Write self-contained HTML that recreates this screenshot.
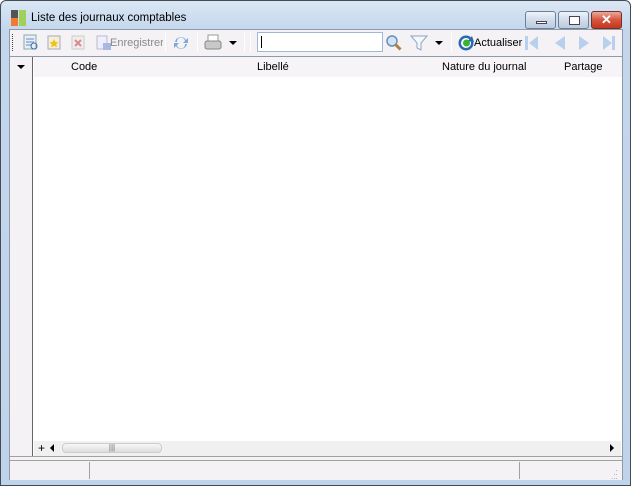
<!DOCTYPE html>
<html><head><meta charset="utf-8"><style>
*{margin:0;padding:0;box-sizing:border-box}
body{width:631px;height:486px;overflow:hidden;font-family:"Liberation Sans",sans-serif;font-size:11px;color:#000;background:#fff}
.win{position:absolute;left:0;top:0;width:631px;height:486px;border:1px solid #434b55;border-radius:6px 6px 0 0;background:linear-gradient(#dbe7f4,#c3d6ec 30px,#bfd3ea);}
.title{position:absolute;left:30px;top:11px;font-size:11.5px;color:#000}
.ico{position:absolute;left:10px;top:9px;width:16px;height:16px}
.btn{position:absolute;top:10px;height:18px;border:1px solid #6d7f96;border-radius:3px;background:linear-gradient(#eef3f9,#d0dcea 50%,#bccbdd)}
.close{background:linear-gradient(#e9a99a,#d5553c 50%,#c0381f);border-color:#7a2d22}
.client{position:absolute;left:8px;top:28px;width:614px;height:451px;background:#f4f2f4;border:1px solid #8e9aa8}
.tb{position:absolute;left:0;top:0;width:612px;height:25px;background:#f4f2f4}
.sep{position:absolute;top:3px;width:1px;height:19px;background:#c8c6c8;border-right:1px solid #fff}
.grid{position:absolute;left:0;top:26px;width:612px;height:401px;background:#fff;border-top:1px solid #8e9aa8;border-bottom:1px solid #a0a0a0}
.rs{position:absolute;left:0;top:0;width:23px;height:100%;background:#f5f2f5;border-right:1px solid #666}
.hdr{position:absolute;left:24px;top:0;right:0;height:20px;background:#f7f4f7;font-size:11px}
.hdr span{position:absolute;top:4px}
.status{position:absolute;left:0;top:430px;width:612px;height:20px;background:#f4f2f4;border-top:1px solid #a0a0a0}
.dis{color:#8a8a8a}
</style></head><body>
<div class="win">
<svg class="ico" viewBox="0 0 16 16"><rect x="0" y="0" width="7" height="8" fill="#555"/><rect x="0" y="8" width="7" height="8" fill="#f07a30"/><rect x="8" y="0" width="7" height="16" fill="#9ed15a"/></svg>
<div class="title">Liste des journaux comptables</div>
<div class="btn" style="left:524px;width:31px"><div style="position:absolute;left:10px;top:9px;width:11px;height:3px;background:#fff;border:1px solid #445"></div></div>
<div class="btn" style="left:557px;width:31px"><div style="position:absolute;left:10px;top:4px;width:11px;height:9px;border:1px solid #445;background:#fff"></div></div>
<div class="btn close" style="left:590px;width:31px;color:#fff;font-weight:bold;text-align:center;line-height:16px;font-size:13px">✕</div>
<div class="client">
<div class="tb">
 <div style="position:absolute;left:2px;top:4px;width:1px;height:17px;border-left:1px dotted #444"></div>
 <svg style="position:absolute;left:13px;top:4px" width="16" height="17"><rect x="1" y="1" width="12" height="14" fill="#e8eef8" stroke="#8aa"/><path d="M3 5h8M3 8h8M3 11h6" stroke="#6a8ac0"/><circle cx="11" cy="12" r="3" fill="none" stroke="#3a6fb0"/></svg>
 <svg style="position:absolute;left:37px;top:5px" width="14" height="15"><rect x="1" y="1" width="12" height="13" fill="#f4f0d8" stroke="#aab"/><path d="M7 4l1.5 3 3 .3-2.3 2 .8 3L7 10.7 4 12.3l.8-3-2.3-2 3-.3z" fill="#f0c020"/></svg>
 <svg style="position:absolute;left:61px;top:5px" width="14" height="15"><rect x="1" y="1" width="12" height="13" fill="#eee" stroke="#ccc"/><path d="M4 5l6 6M10 5l-6 6" stroke="#e08888" stroke-width="2"/></svg>
 <svg style="position:absolute;left:86px;top:5px" width="16" height="16"><rect x="1" y="1" width="10" height="13" fill="#eef" stroke="#bbc"/><rect x="7" y="8" width="8" height="7" fill="#a8b8e0"/></svg>
 <span class="dis" style="position:absolute;left:100px;top:7px;width:53px;overflow:hidden;white-space:nowrap">Enregistrer</span>
 <div class="sep" style="left:155px"></div>
 <svg style="position:absolute;left:162px;top:4px" width="18" height="18"><path d="M3 8a6 6 0 0 1 11-2l2-2v5h-5l2-2a4 4 0 0 0-8 1z" fill="#7aaad8"/><path d="M15 10a6 6 0 0 1-11 2l-2 2v-5h5l-2 2a4 4 0 0 0 8-1z" fill="#7aaad8"/></svg>
 <div class="sep" style="left:187px"></div>
 <svg style="position:absolute;left:194px;top:4px" width="18" height="18"><rect x="4" y="1" width="10" height="6" fill="#fff" stroke="#999"/><rect x="1" y="7" width="16" height="8" rx="2" fill="#c8c8c8" stroke="#888"/></svg>
 <div style="position:absolute;left:219px;top:11px;border:4px solid transparent;border-top:4px solid #000;border-bottom:0"></div>
 <div class="sep" style="left:234px"></div><div class="sep" style="left:240px"></div>
 <div style="position:absolute;left:247px;top:2px;width:126px;height:20px;background:#fff;border:1px solid #a0b8d8"><div style="position:absolute;left:3px;top:3px;width:1px;height:12px;background:#000"></div></div>
 <svg style="position:absolute;left:375px;top:4px" width="18" height="18"><circle cx="7" cy="7" r="5" fill="#cfe4f8" stroke="#6a8fb8" stroke-width="1.5"/><path d="M10.5 10.5l5 5" stroke="#b08040" stroke-width="3"/></svg>
 <svg style="position:absolute;left:400px;top:4px" width="18" height="18"><path d="M1 2h16l-6 7v7l-4-2V9z" fill="#f4f8fc" stroke="#8aa4c4"/></svg>
 <div style="position:absolute;left:425px;top:11px;border:4px solid transparent;border-top:4px solid #000;border-bottom:0"></div>
 <div class="sep" style="left:441px"></div>
 <svg style="position:absolute;left:447px;top:4px" width="18" height="18"><circle cx="9" cy="9" r="7.5" fill="#2a6ab0"/><circle cx="9" cy="9" r="5" fill="#fff"/><circle cx="9.5" cy="9" r="3.5" fill="#3cb030"/><path d="M15 2l2 6-6-1z" fill="#2a6ab0"/></svg>
 <span style="position:absolute;left:464px;top:7px">Actualiser</span>
 <svg style="position:absolute;left:513px;top:5px" width="100" height="16"><g fill="#b8d0ee"><rect x="2" y="1" width="3" height="14"/><path d="M15 1v14L6 8z"/><path d="M42 1v14L32 8z"/><path d="M56 1v14l10-7z"/><path d="M80 1v14l9-7z"/><rect x="89" y="1" width="3" height="14"/></g></svg>
</div>
<div class="grid">
 <div class="rs"><div style="position:absolute;left:7px;top:8px;border:4px solid transparent;border-top:4px solid #000;border-bottom:0"></div></div>
 <div class="hdr"><span style="left:37px">Code</span><span style="left:223px">Libellé</span><span style="left:408px">Nature du journal</span><span style="left:530px">Partage</span></div>
 <div style="position:absolute;left:24px;top:384px;width:587px;height:15px;background:#f0f0f0">
  <span style="position:absolute;left:4px;top:0px;font-size:12px">+</span>
  <div style="position:absolute;left:16px;top:3px;border:4px solid transparent;border-right:4px solid #000;border-left:0"></div>
  <div style="position:absolute;left:28px;top:2px;width:100px;height:10px;border-radius:4px;background:linear-gradient(#f8f8f8,#dcdcdc);border:1px solid #ccc;font-size:8px;text-align:center;line-height:8px;color:#666">|||</div>
  <div style="position:absolute;left:576px;top:3px;border:4px solid transparent;border-left:4px solid #000;border-right:0"></div>
 </div>
</div>
<div class="status">
 <div style="position:absolute;left:79px;top:1px;width:1px;height:17px;background:#a0a0a0"></div>
 <div style="position:absolute;left:509px;top:1px;width:1px;height:17px;background:#a0a0a0"></div>
 <div style="position:absolute;left:601px;top:6px;font-size:8px;color:#999;line-height:4px">&nbsp;&nbsp;.<br>&nbsp;..<br>...</div>
</div>
</div>
</div>
</body></html>
